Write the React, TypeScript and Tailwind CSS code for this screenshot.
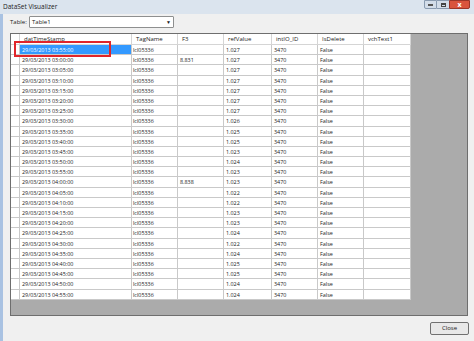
import React from 'react';

const times = [
  '03:55:00', '03:00:00', '03:05:00', '03:10:00', '03:15:00', '03:20:00', '03:25:00',
  '03:30:00', '03:35:00', '03:40:00', '03:45:00', '03:50:00', '03:55:00', '04:00:00',
  '04:05:00', '04:10:00', '04:15:00', '04:20:00', '04:25:00', '04:30:00', '04:35:00',
  '04:40:00', '04:45:00', '04:50:00', '04:55:00',
];

const refs = [
  '1.027', '1.027', '1.027', '1.027', '1.027', '1.027', '1.027', '1.026', '1.025', '1.025',
  '1.023', '1.024', '1.023', '1.023', '1.022', '1.022', '1.023', '1.023', '1.024', '1.022',
  '1.024', '1.025', '1.025', '1.024', '1.024',
];

const f3: Record<number, string> = { 1: '8.831', 13: '8.838' };

const headers = ['datTimeStamp', 'TagName', 'F3', 'refValue', 'intIO_ID', 'IsDelete', 'vchText1'];

const cols = 'grid grid-cols-[9px_112px_46px_46px_48px_46px_46px_47px]';

export default function App() {
  return (
    <div
      className="w-[474px] h-[341px] bg-[#f0f0f0] flex flex-col overflow-hidden text-[#1a1a1a]"
      style={{ fontFamily: '"Open Sans", "Liberation Sans", sans-serif' }}
    >
      {/* title bar */}
      <div className="h-[14px] flex items-start bg-[#dbe4ee]">
        <span className="text-[6.5px] leading-none mt-[4px] ml-[3px] text-[#222]">DataSet Visualizer</span>
        <div className="ml-auto mr-[4px] flex h-[9px]">
          <div className="w-[13px] h-full border border-[#8a9bb0] rounded-bl-[2px] bg-[#d3dde9] flex items-end justify-center pb-[2px]">
            <div className="w-[5px] h-[2px] bg-white border-[0.5px] border-[#555]" />
          </div>
          <div className="w-[12px] h-full border-y border-[#8a9bb0] bg-[#d3dde9] flex items-center justify-center">
            <div className="w-[5px] h-[4px] border border-[#444] border-t-2" />
          </div>
          <div className="w-[21px] h-full border border-[#9a3528] rounded-br-[2px] bg-[#d9533c] flex items-center justify-center text-white text-[7px] font-bold leading-none">
            x
          </div>
        </div>
      </div>

      <div className="flex-1 flex">
        <div className="w-[3px] bg-[#a9c2e2]" />
        <div className="flex-1 flex flex-col pl-[7px] pr-[6px]">
          {/* table picker */}
          <div className="flex items-center h-[12px] mt-[2px]">
            <span className="text-[6px] w-[19px]">Table:</span>
            <div className="w-[145px] h-[12px] border border-[#8e8f8f] bg-white flex items-center px-[2px] rounded-[1px]">
              <span className="text-[6px]">Table1</span>
              <span className="ml-auto text-[5px] leading-none">▼</span>
            </div>
          </div>

          {/* grid */}
          <div className="mt-[5px] h-[283px] border border-[#6e6e6e] bg-[#ababab] relative">
            <div className="w-[400px] bg-white">
              <div className={`${cols} h-[11px]`}>
                <div className="border-r border-b border-[#d5d5d5]" />
                {headers.map((h) => (
                  <div key={h} className="border-r border-b border-[#d5d5d5] text-[6px] leading-[11px] pl-[4px] whitespace-nowrap overflow-hidden">
                    {h}
                  </div>
                ))}
              </div>
              {times.map((t, i) => (
                <div key={i} className={`${cols} h-[10.2px] text-[5.4px] leading-[10px] whitespace-nowrap`}>
                  <div className="border-r border-b border-[#c9c9c9]" />
                  <div className={`border-r border-b border-[#c9c9c9] pl-[2px] overflow-hidden ${i === 0 ? 'bg-[#3399ff] text-white' : ''}`}>
                    29/03/2013 {t}
                  </div>
                  <div className="border-r border-b border-[#c9c9c9] pl-[1px] overflow-hidden">lcl05336</div>
                  <div className="border-r border-b border-[#c9c9c9] pl-[2px] overflow-hidden">{f3[i] ?? ''}</div>
                  <div className="border-r border-b border-[#c9c9c9] pl-[2px] overflow-hidden">{refs[i]}</div>
                  <div className="border-r border-b border-[#c9c9c9] pl-[2px] overflow-hidden">3470</div>
                  <div className="border-r border-b border-[#c9c9c9] pl-[2px] overflow-hidden">False</div>
                  <div className="border-r border-b border-[#c9c9c9]" />
                </div>
              ))}
            </div>
            <div className="absolute left-[3px] top-[7px] w-[97px] h-[16px] border-2 border-[#e0252a]" />
          </div>

          {/* footer */}
          <div className="flex justify-end mt-[6px] mr-[-1px]">
            <div className="w-[39px] h-[13px] border border-[#707070] rounded-[2px] bg-[#e8e8e8] flex items-center justify-center text-[6px]">
              Close
            </div>
          </div>
        </div>
      </div>
    </div>
  );
}
